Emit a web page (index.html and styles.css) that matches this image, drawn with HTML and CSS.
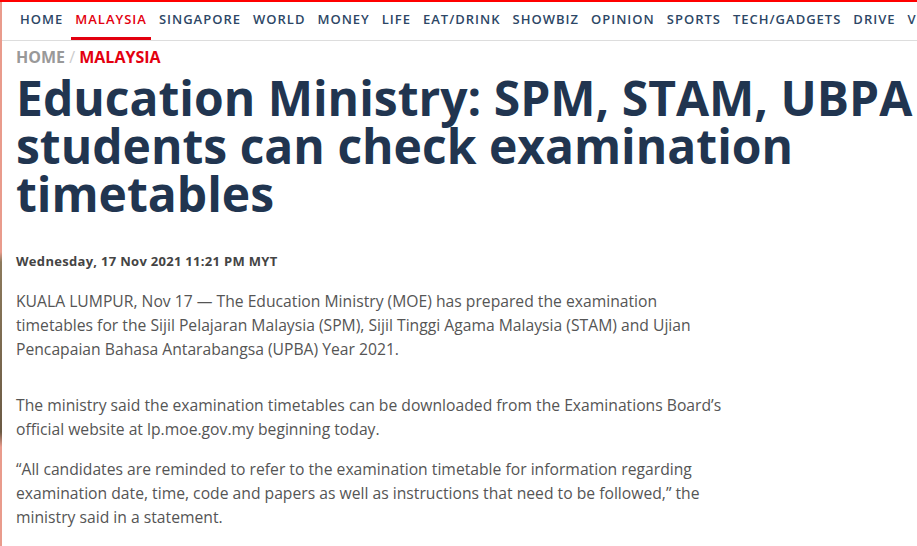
FILE: index.html
```html
<!DOCTYPE html>
<html lang="en">
<head>
<meta charset="utf-8">
<title>Education Ministry: SPM, STAM, UBPA students can check examination timetables</title>
<link rel="stylesheet" href="styles.css">
</head>
<body>
<div class="page">
  <div class="edge"></div>
  <div class="main">
    <nav class="topnav">
      <a class="nav-item">Home</a>
      <a class="nav-item active">Malaysia</a>
      <a class="nav-item">Singapore</a>
      <a class="nav-item">World</a>
      <a class="nav-item">Money</a>
      <a class="nav-item">Life</a>
      <a class="nav-item">Eat/Drink</a>
      <a class="nav-item">Showbiz</a>
      <a class="nav-item">Opinion</a>
      <a class="nav-item">Sports</a>
      <a class="nav-item">Tech/Gadgets</a>
      <a class="nav-item">Drive</a>
      <a class="nav-item">Videos</a>
    </nav>
    <article class="article">
      <div class="crumbs"><span class="crumb-home">HOME</span> <span class="crumb-sep">/</span> <span class="crumb-cur">MALAYSIA</span></div>
      <h1 class="headline">Education Ministry: SPM, STAM, UBPA students can check examination timetables</h1>
      <div class="dateline">Wednesday, 17 Nov 2021 11:21 PM MYT</div>
      <div class="body">
        <p>KUALA LUMPUR, Nov 17 — The Education Ministry (MOE) has prepared the examination timetables for the Sijil Pelajaran Malaysia (SPM), Sijil Tinggi Agama Malaysia (STAM) and Ujian Pencapaian Bahasa Antarabangsa (UPBA) Year 2021.</p>
        <div class="inline-slot"></div>
        <p>The ministry said the examination timetables can be downloaded from the Examinations Board’s official website at lp.moe.gov.my beginning today.</p>
        <p>“All candidates are reminded to refer to the examination timetable for information regarding examination date, time, code and papers as well as instructions that need to be followed,” the ministry said in a statement.</p>
      </div>
    </article>
  </div>
</div>
</body>
</html>
```

FILE: styles.css
```css
html, body {
  margin: 0;
  padding: 0;
  background: #fff;
}

body {
  font-family: "Open Sans", "Liberation Sans", sans-serif;
  overflow: hidden;
}

.page {
  display: flex;
  min-height: 546px;
  border-top: 2px solid #f00;
  box-sizing: border-box;
}

/* thin strip of the neighbouring panel along the left edge */
.edge {
  flex: 0 0 2px;
  background: linear-gradient(to bottom, #e99b8c 0, #e99b8c 250px, #8c7a5c 260px, #6b5a44 430px, #e99b8c 445px, #e99b8c 100%);
}

.main {
  flex: 1;
  min-width: 0;
}

.topnav {
  display: flex;
  gap: 4px;
  padding: 0 0 0 14px;
  height: 38px;
  border-bottom: 1px solid #ddd;
  white-space: nowrap;
  overflow: hidden;
}

.nav-item {
  display: block;
  padding: 0 4px;
  font-size: 13px;
  font-weight: 600;
  letter-spacing: 1px;
  text-transform: uppercase;
  color: #2d4766;
  line-height: 35px;
  border-bottom: 3px solid transparent;
}

.nav-item.active {
  color: #e3000f;
  border-bottom-color: #e3000f;
}

.article {
  padding: 0 0 0 14px;
}

.crumbs {
  margin-top: 5px;
  font-size: 16px;
  font-weight: 700;
  line-height: 22px;
}

.crumb-home { color: #999; }
.crumb-sep { color: #ccc; font-weight: 400; }
.crumb-cur { color: #e3000f; }

.headline {
  margin: 6px 0 0;
  font-size: 48px;
  font-weight: 700;
  line-height: 48px;
  color: #213550;
}

.dateline {
  margin-top: 34px;
  font-size: 13px;
  font-weight: 700;
  letter-spacing: 0.3px;
  color: #444;
  line-height: 18px;
}

.body {
  width: 712px;
  margin-top: 19px;
  font-size: 15.7px;
  line-height: 24px;
  color: #555;
}

.body p {
  margin: 0 0 16px;
}

.inline-slot {
  height: 16px;
}
```
